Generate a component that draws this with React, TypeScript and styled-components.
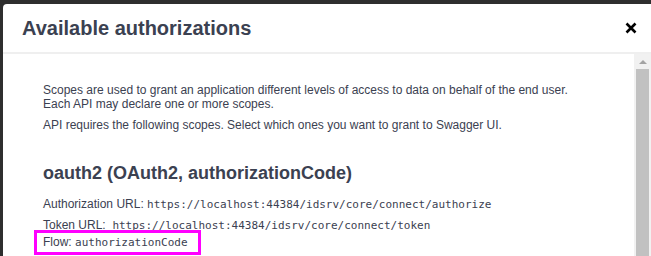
import styled, { createGlobalStyle } from 'styled-components';

const GlobalStyle = createGlobalStyle`
  html, body {
    margin: 0;
    padding: 0;
    background: #2e2e2e;
    overflow: hidden;
  }
  body {
    font-family: "Liberation Sans", Arial, sans-serif;
    color: #3b4151;
  }
`;

const Backdrop = styled.div`
  height: 256px;
  padding: 4px 0 0 3px;
  box-sizing: border-box;
  overflow: hidden;
`;

const Modal = styled.div`
  background: #fff;
  border-radius: 4px 0 0 0;
  height: 252px;
  display: flex;
  flex-direction: column;
`;

const Header = styled.div`
  display: flex;
  align-items: center;
  justify-content: space-between;
  height: 48px;
  padding: 0 14px 0 19px;
  border-bottom: 2px solid #efefef;
  flex-shrink: 0;
`;

const Title = styled.h3`
  margin: 0;
  font-size: 20px;
  font-weight: 700;
  color: #3b4151;
`;

const CloseButton = styled.button`
  border: 0;
  background: none;
  padding: 0;
  width: 12px;
  height: 12px;
  display: flex;
  cursor: pointer;
`;

const Body = styled.div`
  flex: 1;
  display: flex;
  min-height: 0;
`;

const Content = styled.div`
  flex: 1;
  padding: 29px 20px 0 40px;
  overflow: hidden;
`;

const Text = styled.p<{ $gap?: number }>`
  margin: ${(p) => p.$gap ?? 0}px 0 0;
  font-size: 12px;
  line-height: 14px;
`;

const SchemeTitle = styled.h4`
  margin: 31px 0 10px;
  font-size: 18px;
  font-weight: 700;
  line-height: 21px;
`;

const Row = styled.div`
  font-size: 12px;
  line-height: 20px;
  white-space: nowrap;
`;

const FlowRow = styled.div`
  display: flex;
  margin-top: -6px;
  font-size: 12px;
  white-space: nowrap;
`;

const Code = styled.code`
  font-family: "DejaVu Sans Mono", "Liberation Mono", monospace;
  font-size: 11px;
`;

const Highlight = styled.span`
  display: block;
  line-height: 18px;
  padding: 0 10px 0 6px;
  margin-left: -9px;
  border: 3px solid #ff00ff;
`;

const Scrollbar = styled.div`
  width: 17px;
  background: #f1f1f1;
  display: flex;
  flex-direction: column;
  align-items: center;
  flex-shrink: 0;
`;

const ScrollArrow = styled.div`
  width: 0;
  height: 0;
  margin: 6px 0 5px;
  border-left: 4px solid transparent;
  border-right: 4px solid transparent;
  border-bottom: 4px solid #a3a3a3;
`;

const Thumb = styled.div`
  width: 13px;
  flex: 1;
  background: #c1c1c1;
`;

export default function App() {
  return (
    <>
      <GlobalStyle />
      <Backdrop>
        <Modal>
          <Header>
            <Title>Available authorizations</Title>
            <CloseButton aria-label="Close">
              <svg width="12" height="12" viewBox="0 0 12 12">
                <path d="M1.5 1.5 L10.5 10.5 M10.5 1.5 L1.5 10.5" stroke="#000" strokeWidth="2.6" />
              </svg>
            </CloseButton>
          </Header>
          <Body>
            <Content>
              <Text>
                Scopes are used to grant an application different levels of access to data on behalf of the end user.
                <br />
                Each API may declare one or more scopes.
              </Text>
              <Text $gap={7}>API requires the following scopes. Select which ones you want to grant to Swagger UI.</Text>
              <SchemeTitle>oauth2 (OAuth2, authorizationCode)</SchemeTitle>
              <Row>
                Authorization URL: <Code>https://localhost:44384/idsrv/core/connect/authorize</Code>
              </Row>
              <Row>
                Token URL:&nbsp; <Code>https://localhost:44384/idsrv/core/connect/token</Code>
              </Row>
              <FlowRow>
                <Highlight>
                  Flow: <Code>authorizationCode</Code>
                </Highlight>
              </FlowRow>
            </Content>
            <Scrollbar>
              <ScrollArrow />
              <Thumb />
            </Scrollbar>
          </Body>
        </Modal>
      </Backdrop>
    </>
  );
}
